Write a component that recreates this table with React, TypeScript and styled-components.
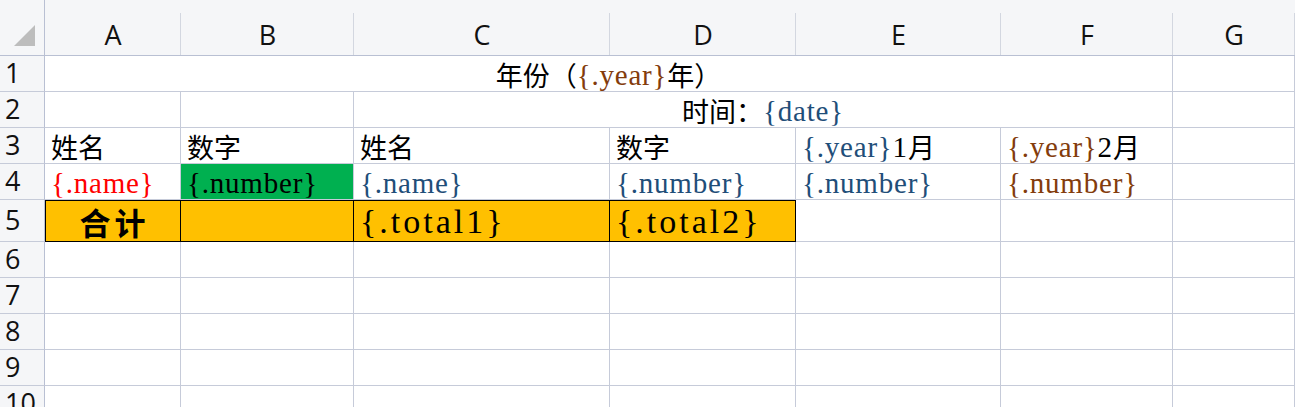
import styled, { createGlobalStyle } from 'styled-components';

const GlobalStyle = createGlobalStyle`
  html, body {
    margin: 0;
    padding: 0;
    background: #ffffff;
  }
`;

const COLS = [45, 136, 173, 256, 186, 205, 172, 122];
const ROWS = [56, 36, 36, 36, 36, 42, 36, 36, 36, 36, 36];
const LINE = '#c6cbd9';
const BLUE = '#1f4e79';
const BROWN = '#833c0c';
const RED = '#ff0000';

const Sheet = styled.div`
  display: grid;
  grid-template-columns: ${COLS.map((c) => `${c}px`).join(' ')};
  grid-template-rows: ${ROWS.map((r) => `${r}px`).join(' ')};
  width: 1295px;
  height: 407px;
  overflow: hidden;
  font-family: 'Noto Sans CJK SC', 'Liberation Sans', sans-serif;
  color: #000;
`;

const Corner = styled.div`
  background: #f5f6f8;
  border-right: 1px solid #b9c0d3;
  border-bottom: 1px solid #b9c0d3;
  box-sizing: border-box;
  display: flex;
  align-items: flex-end;
  padding: 0 0 9px 14px;
`;

const Triangle = styled.div`
  width: 0;
  height: 0;
  border-left: 21px solid transparent;
  border-bottom: 21px solid #bdbdbd;
`;

const ColHead = styled.div`
  background: linear-gradient(#d3d7e0, #d3d7e0) right 13px / 1px calc(100% - 13px) no-repeat,
    #f5f6f8;
  border-bottom: 1px solid #b9c0d3;
  box-sizing: border-box;
  display: flex;
  align-items: center;
  justify-content: center;
  padding-top: 13px;
  font-family: 'Open Sans', 'Noto Sans', sans-serif;
  font-size: 27px;
  color: #111;
`;

const RowHead = styled.div`
  background: #f5f6f8;
  border-right: 1px solid #b9c0d3;
  border-bottom: 1px solid ${LINE};
  box-sizing: border-box;
  display: flex;
  align-items: center;
  padding-left: 5px;
  font-family: 'Open Sans', 'Noto Sans', sans-serif;
  font-size: 27px;
  color: #111;
  line-height: 1.2;
`;

const Cell = styled.div<{
  $span?: number;
  $bg?: string;
  $align?: 'left' | 'center';
  $boxed?: boolean;
  $first?: boolean;
  $big?: boolean;
}>`
  grid-column: span ${(p) => p.$span ?? 1};
  background: ${(p) => p.$bg ?? '#ffffff'};
  border-right: 1px solid ${(p) => (p.$boxed ? '#000' : LINE)};
  border-bottom: 1px solid ${(p) => (p.$boxed ? '#000' : LINE)};
  box-shadow: ${(p) =>
    p.$boxed ? (p.$first ? 'inset 1px 1px 0 #000' : 'inset 0 1px 0 #000') : 'none'};
  box-sizing: border-box;
  display: flex;
  align-items: center;
  justify-content: ${(p) => (p.$align === 'center' ? 'center' : 'flex-start')};
  padding: ${(p) => (p.$align === 'center' ? '3px 0 0 0' : '3px 0 0 6px')};
  font-size: ${(p) => (p.$big ? '31px' : '27px')};
  white-space: nowrap;
  line-height: 1.2;
`;

const Tok = styled.span<{ $c?: string; $big?: boolean }>`
  font-family: 'Liberation Serif', 'DejaVu Serif', serif;
  font-size: ${(p) => (p.$big ? '34px' : '29px')};
  letter-spacing: ${(p) => (p.$big ? '3px' : '0.8px')};
  line-height: 1;
  color: ${(p) => p.$c ?? '#000'};
`;

const Bold = styled.span`
  font-weight: 700;
  letter-spacing: 4px;
  padding-left: 4px;
`;

const emptyRows = [6, 7, 8, 9, 10];

export default function App() {
  return (
    <>
      <GlobalStyle />
      <Sheet>
        <Corner>
          <Triangle />
        </Corner>
        {['A', 'B', 'C', 'D', 'E', 'F', 'G'].map((c) => (
          <ColHead key={c}>{c}</ColHead>
        ))}

        <RowHead>1</RowHead>
        <Cell $span={6} $align="center">
          年份（<Tok $c={BROWN}>{'{.year}'}</Tok>年）
        </Cell>
        <Cell />

        <RowHead>2</RowHead>
        <Cell />
        <Cell />
        <Cell $span={4} $align="center">
          时间：<Tok $c={BLUE}>{'{date}'}</Tok>
        </Cell>
        <Cell />

        <RowHead>3</RowHead>
        <Cell>姓名</Cell>
        <Cell>数字</Cell>
        <Cell>姓名</Cell>
        <Cell>数字</Cell>
        <Cell>
          <Tok $c={BLUE}>{'{.year}'}</Tok>
          <Tok>1</Tok>月
        </Cell>
        <Cell>
          <Tok $c={BROWN}>{'{.year}'}</Tok>
          <Tok>2</Tok>月
        </Cell>
        <Cell />

        <RowHead>4</RowHead>
        <Cell>
          <Tok $c={RED}>{'{.name}'}</Tok>
        </Cell>
        <Cell $bg="#00b050">
          <Tok>{'{.number}'}</Tok>
        </Cell>
        <Cell>
          <Tok $c={BLUE}>{'{.name}'}</Tok>
        </Cell>
        <Cell>
          <Tok $c={BLUE}>{'{.number}'}</Tok>
        </Cell>
        <Cell>
          <Tok $c={BLUE}>{'{.number}'}</Tok>
        </Cell>
        <Cell>
          <Tok $c={BROWN}>{'{.number}'}</Tok>
        </Cell>
        <Cell />

        <RowHead>5</RowHead>
        <Cell $bg="#ffc000" $boxed $first $big $align="center">
          <Bold>合计</Bold>
        </Cell>
        <Cell $bg="#ffc000" $boxed $big />
        <Cell $bg="#ffc000" $boxed $big>
          <Tok $big>{'{.total1}'}</Tok>
        </Cell>
        <Cell $bg="#ffc000" $boxed $big>
          <Tok $big>{'{.total2}'}</Tok>
        </Cell>
        <Cell />
        <Cell />
        <Cell />

        {emptyRows.map((r) => (
          <Row key={r} n={r} />
        ))}
      </Sheet>
    </>
  );
}

function Row({ n }: { n: number }) {
  return (
    <>
      <RowHead>{n}</RowHead>
      {[0, 1, 2, 3, 4, 5, 6].map((i) => (
        <Cell key={i} />
      ))}
    </>
  );
}
